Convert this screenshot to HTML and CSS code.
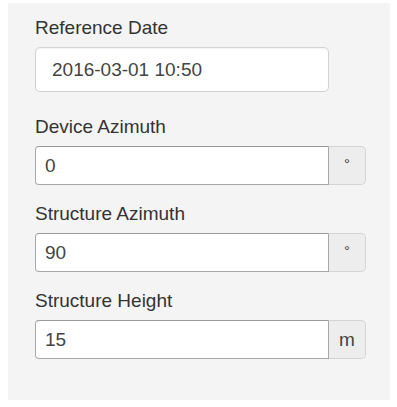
FILE: index.html
```html
<!DOCTYPE html>
<html>
<head>
<meta charset="utf-8">
<link rel="stylesheet" href="styles.css">
</head>
<body>
<div class="panel">
  <div class="field field-first">
    <label class="label">Reference Date</label>
    <div class="input input-solo">2016-03-01 10:50</div>
  </div>
  <div class="field">
    <label class="label">Device Azimuth</label>
    <div class="group">
      <div class="input input-grouped">0</div>
      <div class="addon addon-deg">°</div>
    </div>
  </div>
  <div class="field">
    <label class="label">Structure Azimuth</label>
    <div class="group">
      <div class="input input-grouped">90</div>
      <div class="addon addon-deg">°</div>
    </div>
  </div>
  <div class="field">
    <label class="label">Structure Height</label>
    <div class="group">
      <div class="input input-grouped">15</div>
      <div class="addon">m</div>
    </div>
  </div>
</div>
</body>
</html>
```

FILE: styles.css
```css
html, body {
  margin: 0;
  padding: 0;
  background: #ffffff;
}
body {
  padding: 3px 7px 7px 8px;
  font-family: "Liberation Sans", Arial, sans-serif;
  font-size: 19px;
  color: #333333;
}
.panel {
  background: #f4f4f4;
  width: 382px;
  height: 397px;
  box-sizing: border-box;
  padding: 11px 0 0 27px;
}
.field {
  width: 331px;
  margin-bottom: 15px;
}
.field-first {
  margin-bottom: 21px;
}
.label {
  display: block;
  line-height: 27px;
  height: 27px;
  margin-bottom: 6px;
}
.input {
  box-sizing: border-box;
  background: #ffffff;
  color: #444444;
  display: flex;
  align-items: center;
}
.input-solo {
  width: 294px;
  height: 45px;
  border: 1px solid #d2d2d2;
  border-radius: 5px;
  padding-left: 16px;
  box-shadow: inset 0 1px 1px rgba(0,0,0,0.05);
}
.group {
  display: flex;
  height: 39px;
}
.input-grouped {
  width: 294px;
  height: 39px;
  border: 1px solid #a8a8a8;
  border-top-color: #999999;
  border-radius: 4px 0 0 4px;
  padding-left: 9px;
}
.addon {
  box-sizing: border-box;
  width: 37px;
  height: 39px;
  background: #ededed;
  border: 1px solid #d4d4d4;
  border-left: none;
  border-radius: 0 5px 5px 0;
  display: flex;
  align-items: center;
  justify-content: center;
  color: #444444;
}
.addon-deg {
  font-size: 15px;
  padding-bottom: 4px;
}
```
